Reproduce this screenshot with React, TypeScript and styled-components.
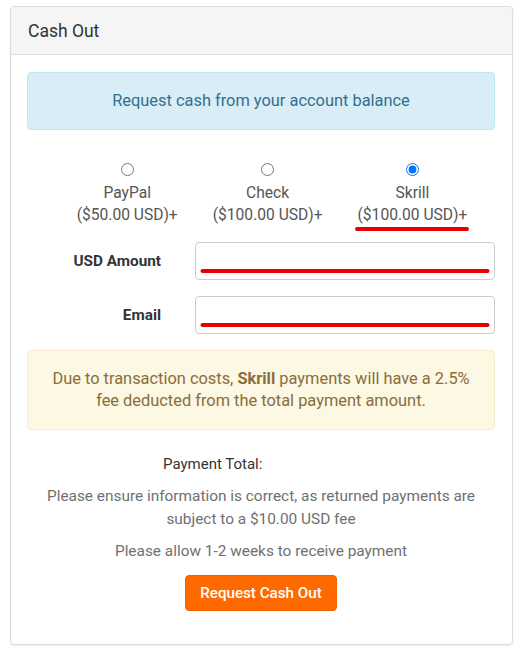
import React from "react";
import styled, { createGlobalStyle } from "styled-components";

const Global = createGlobalStyle`
  html, body { margin: 0; padding: 0; background: #fff; }
  body { font-family: Roboto, "Liberation Sans", Arial, sans-serif; color: #333; }
  * { box-sizing: border-box; }
`;

const Page = styled.div`
  padding: 6px 0 10px 10px;
`;

const Panel = styled.section`
  width: 503px;
  border: 1px solid #dcdcdc;
  border-radius: 4px;
  background: #fff;
  box-shadow: 0 1px 2px rgba(0, 0, 0, 0.08);
  overflow: hidden;
`;

const Header = styled.header`
  height: 48px;
  display: flex;
  align-items: center;
  padding: 0 17px;
  background: #f5f5f5;
  border-bottom: 1px solid #dddddd;
`;

const Title = styled.h3`
  margin: 0;
  font-size: 17.5px;
  font-weight: 400;
  color: #333;
`;

const Body = styled.div`
  padding: 17px 17px 33px 16px;
  display: flex;
  flex-direction: column;
`;

const Alert = styled.div<{ $tone: "info" | "warning" }>`
  border: 1px solid ${(p) => (p.$tone === "info" ? "#bce8f1" : "#faebcc")};
  background: ${(p) => (p.$tone === "info" ? "#d9edf7" : "#fcf8e3")};
  color: ${(p) => (p.$tone === "info" ? "#31708f" : "#8a6d3b")};
  border-radius: 4px;
  font-size: 16.4px;
  line-height: 22px;
  text-align: center;
  padding: ${(p) => (p.$tone === "info" ? "17px 15px" : "17px 20px")};
  strong { font-weight: 700; }
`;

const RadioGroup = styled.div`
  display: flex;
  justify-content: center;
  gap: 35px;
  margin-top: 33px;
  padding-left: 22px;
`;

const RadioOption = styled.label`
  position: relative;
  display: flex;
  flex-direction: column;
  align-items: center;
  font-size: 15.6px;
  line-height: 22px;
  color: #555;
`;

const RadioInput = styled.input`
  width: 13px;
  height: 13px;
  margin: 0 0 6px 0;
`;

const Mark = styled.span<{ $width: number }>`
  position: absolute;
  left: 50%;
  transform: translateX(-50%);
  width: ${(p) => p.$width}px;
  height: 4px;
  border-radius: 2px;
  background: #e60000;
`;

const PriceMark = styled(Mark)`
  bottom: -5px;
`;

const Form = styled.div`
  display: grid;
  grid-template-columns: 134px 1fr;
  column-gap: 34px;
  row-gap: 16px;
  margin-top: 16px;
  align-items: center;
`;

const FieldLabel = styled.label`
  text-align: right;
  font-size: 15.3px;
  font-weight: 700;
  color: #333;
`;

const InputWrap = styled.div`
  position: relative;
  height: 38px;
`;

const TextInput = styled.input`
  width: 100%;
  height: 38px;
  border: 1px solid #cccccc;
  border-radius: 4px;
  background: #fff;
  font: inherit;
  padding: 6px 12px;
`;

const InputMark = styled(Mark)`
  bottom: 7px;
`;

const WarningBox = styled(Alert)`
  margin-top: 16px;
`;

const Total = styled.div`
  margin-top: 23px;
  padding-left: 136px;
  font-size: 15px;
  line-height: 22px;
  color: #333;
`;

const Note = styled.p<{ $gap: number }>`
  margin: ${(p) => p.$gap}px 0 0;
  text-align: center;
  font-size: 15.4px;
  line-height: 23px;
  color: #707070;
  padding: 0 10px;
`;

const Button = styled.button`
  align-self: center;
  margin: 12px 0 0 0;
  height: 36px;
  padding: 0 14px;
  border: 1px solid #f26100;
  border-radius: 4px;
  background: #ff6a00;
  color: #fff;
  font-family: Roboto, "Liberation Sans", Arial, sans-serif;
  font-size: 15.2px;
  font-weight: 500;
  cursor: pointer;
`;

const options = [
  { name: "PayPal", price: "($50.00 USD)+", checked: false },
  { name: "Check", price: "($100.00 USD)+", checked: false },
  { name: "Skrill", price: "($100.00 USD)+", checked: true },
];

export default function App() {
  return (
    <>
      <Global />
      <Page>
        <Panel>
          <Header>
            <Title>Cash Out</Title>
          </Header>
          <Body>
            <Alert $tone="info">Request cash from your account balance</Alert>
            <RadioGroup>
              {options.map((o) => (
                <RadioOption key={o.name}>
                  <RadioInput type="radio" name="method" defaultChecked={o.checked} />
                  <span>{o.name}</span>
                  <span>{o.price}</span>
                  {o.checked && <PriceMark $width={114} />}
                </RadioOption>
              ))}
            </RadioGroup>
            <Form>
              <FieldLabel>USD Amount</FieldLabel>
              <InputWrap>
                <TextInput type="text" />
                <InputMark $width={289} />
              </InputWrap>
              <FieldLabel>Email</FieldLabel>
              <InputWrap>
                <TextInput type="text" />
                <InputMark $width={289} />
              </InputWrap>
            </Form>
            <WarningBox $tone="warning">
              Due to transaction costs, <strong>Skrill</strong> payments will have a 2.5% fee
              deducted from the total payment amount.
            </WarningBox>
            <Total>Payment Total:</Total>
            <Note $gap={10}>
              Please ensure information is correct, as returned payments are subject to a
              $10.00 USD fee
            </Note>
            <Note $gap={9}>Please allow 1-2 weeks to receive payment</Note>
            <Button>Request Cash Out</Button>
          </Body>
        </Panel>
      </Page>
    </>
  );
}
